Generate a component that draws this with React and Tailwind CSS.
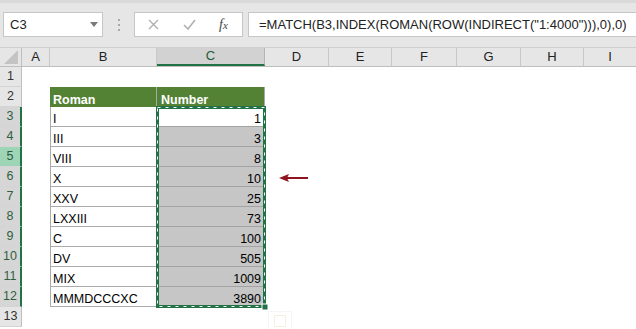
import React from "react";

const rows = [
  ["I", "1"],
  ["III", "3"],
  ["VIII", "8"],
  ["X", "10"],
  ["XXV", "25"],
  ["LXXIII", "73"],
  ["C", "100"],
  ["DV", "505"],
  ["MIX", "1009"],
  ["MMMDCCCXC", "3890"],
];

function RowHeader({ n, selected, hover }) {
  const base =
    "w-[22px] h-full flex items-center justify-center text-[12.5px] leading-none border-b border-[#d4d4d4] ";
  if (hover)
    return (
      <div className={base + "bg-[#9fd5b7] text-[#2b5b3f] border-r-2 border-r-[#217346]"}>{n}</div>
    );
  if (selected)
    return (
      <div className={base + "bg-[#d6d6d6] text-[#2e5f41] border-r-2 border-r-[#217346]"}>{n}</div>
    );
  return <div className={base + "bg-[#e6e6e6] text-[#333] border-r border-r-[#bfbfbf]"}>{n}</div>;
}

function EmptyCols() {
  return (
    <>
      <div className="w-[64px]" />
      <div className="w-[63px]" />
      <div className="w-[65px]" />
      <div className="w-[64px]" />
      <div className="w-[63px]" />
      <div className="flex-1" />
    </>
  );
}

export default function App() {
  return (
    <div className="w-[636px] h-[329px] overflow-hidden bg-white relative font-['Liberation_Sans',Arial,sans-serif] text-black">
      {/* Formula bar */}
      <div className="h-[48px] bg-[#e6e6e6] border-t-[3px] border-[#d9d9d9] border-b border-b-[#d0d0d0] flex items-start pt-[9px]">
        <div className="ml-[3px] w-[100px] h-[25px] bg-white border border-[#c6c6c6] flex items-center relative">
          <span className="pl-[6px] text-[13px] text-[#222]">C3</span>
          <svg className="absolute left-[86px] top-[9px]" width="8" height="5" viewBox="0 0 8 5">
            <polygon points="0,0 8,0 4,5" fill="#7a7a7a" />
          </svg>
        </div>
        <div className="w-[31px] h-[25px] flex flex-col items-center justify-center gap-[3px]">
          <div className="w-[2px] h-[2px] bg-[#a8a8a8]" />
          <div className="w-[2px] h-[2px] bg-[#a8a8a8]" />
          <div className="w-[2px] h-[2px] bg-[#a8a8a8]" />
        </div>
        <div className="w-[109px] h-[25px] bg-white border border-[#c6c6c6] flex items-center">
          <svg className="ml-[13px]" width="11" height="11" viewBox="0 0 11 11">
            <path d="M1 1 L10 10 M10 1 L1 10" stroke="#b0b0b0" strokeWidth="1.4" />
          </svg>
          <svg className="ml-[24px]" width="13" height="11" viewBox="0 0 13 11">
            <path d="M1 6 L5 10 L12 1" stroke="#b0b0b0" strokeWidth="1.6" fill="none" />
          </svg>
          <span className="ml-[23px] font-['Liberation_Serif',serif] italic text-[14px] text-[#444] leading-none">
            f<span className="text-[11px]">x</span>
          </span>
        </div>
        <div className="ml-[5px] flex-1 h-[25px] bg-white border border-[#c6c6c6] border-r-0 flex items-center">
          <span className="pl-[10px] text-[13px] text-[#222] whitespace-nowrap">
            =MATCH(B3,INDEX(ROMAN(ROW(INDIRECT("1:4000"))),0),0)
          </span>
        </div>
      </div>

      {/* Column headers */}
      <div className="flex h-[19px] bg-[#e6e6e6] border-b border-[#bfbfbf] text-[13px] text-[#222]">
        <div className="w-[22px] h-full border-r border-[#bfbfbf] relative">
          <svg className="absolute right-[3px] bottom-[2px]" width="14" height="14" viewBox="0 0 14 14">
            <polygon points="14,0 14,14 0,14" fill="#c4c4c4" />
          </svg>
        </div>
        <div className="w-[28px] h-full border-r border-[#c8c8c8] flex items-center justify-center">A</div>
        <div className="w-[107px] h-full border-r border-[#c8c8c8] flex items-center justify-center">B</div>
        <div className="w-[108px] h-full bg-[#d2d2d2] border-r border-[#b4b4b4] border-b-2 border-b-[#217346] flex items-center justify-center text-[#1e5c3a]">C</div>
        <div className="w-[64px] h-full border-r border-[#c8c8c8] flex items-center justify-center">D</div>
        <div className="w-[63px] h-full border-r border-[#c8c8c8] flex items-center justify-center">E</div>
        <div className="w-[65px] h-full border-r border-[#c8c8c8] flex items-center justify-center">F</div>
        <div className="w-[64px] h-full border-r border-[#c8c8c8] flex items-center justify-center">G</div>
        <div className="w-[63px] h-full border-r border-[#c8c8c8] flex items-center justify-center">H</div>
        <div className="flex-1 h-full flex items-center justify-center">I</div>
      </div>

      {/* Row 1 */}
      <div className="flex h-[20px]">
        <RowHeader n={1} />
        <div className="w-[28px]" />
        <div className="w-[107px]" />
        <div className="w-[108px]" />
        <EmptyCols />
      </div>

      {/* Row 2 header */}
      <div className="flex h-[20px] text-[12.5px] leading-none">
        <RowHeader n={2} />
        <div className="w-[28px]" />
        <div className="w-[107px] h-full bg-[#548235] border-r border-[#a9a9a9] text-white font-bold flex items-end pb-[1px] pl-[3px]">
          Roman
        </div>
        <div className="w-[108px] h-full bg-[#548235] border-r border-[#a9a9a9] text-white font-bold flex items-end pb-[1px] pl-[4px]">
          Number
        </div>
        <EmptyCols />
      </div>

      {rows.map(([r, n], i) => (
        <div key={i} className="flex h-[20px] text-[12.5px] leading-none">
          <RowHeader n={i + 3} selected hover={i === 2} />
          <div className="w-[28px]" />
          <div className="w-[107px] h-full bg-white border-l border-b border-[#ababab] flex items-end pb-[1px] pl-[2px]">
            {r}
          </div>
          <div
            className={
              "w-[108px] h-full border-l border-r border-b border-[#a3a3a3] flex items-end justify-end pb-[1px] pr-[3px] " +
              (i === 0 ? "bg-white" : "bg-[#c6c6c6]")
            }
          >
            {n}
          </div>
          <EmptyCols />
        </div>
      ))}

      {/* Row 13 */}
      <div className="flex h-[20px]">
        <RowHeader n={13} />
        <div className="flex-1" />
      </div>

      {/* Marching ants copy border around C3:C12 */}
      <svg className="absolute left-[156px] top-[106px]" width="112" height="205" viewBox="0 0 112 205">
        <rect x="1.5" y="1.5" width="107" height="199" fill="none" stroke="#217346" strokeWidth="3" />
        <rect x="1.5" y="1.5" width="107" height="199" fill="none" stroke="#ffffff" strokeWidth="1" strokeDasharray="3 5" />
        <rect x="106" y="198" width="6" height="6" fill="#217346" stroke="#ffffff" strokeWidth="1" />
      </svg>

      {/* Arrow */}
      <svg className="absolute left-[279px] top-[173px]" width="30" height="10" viewBox="0 0 30 10">
        <polygon points="0,5 10,1 8,5 10,9" fill="#8f1420" />
        <rect x="7" y="4" width="22" height="2" fill="#8f1420" />
      </svg>

      {/* Faint paste options icon */}
      <div className="absolute left-[268px] top-[311px] w-[24px] h-[20px] border border-[#f5f5f5] flex items-center justify-center">
        <div className="w-[12px] h-[12px] border border-[#f7f1e4]" />
      </div>
    </div>
  );
}
